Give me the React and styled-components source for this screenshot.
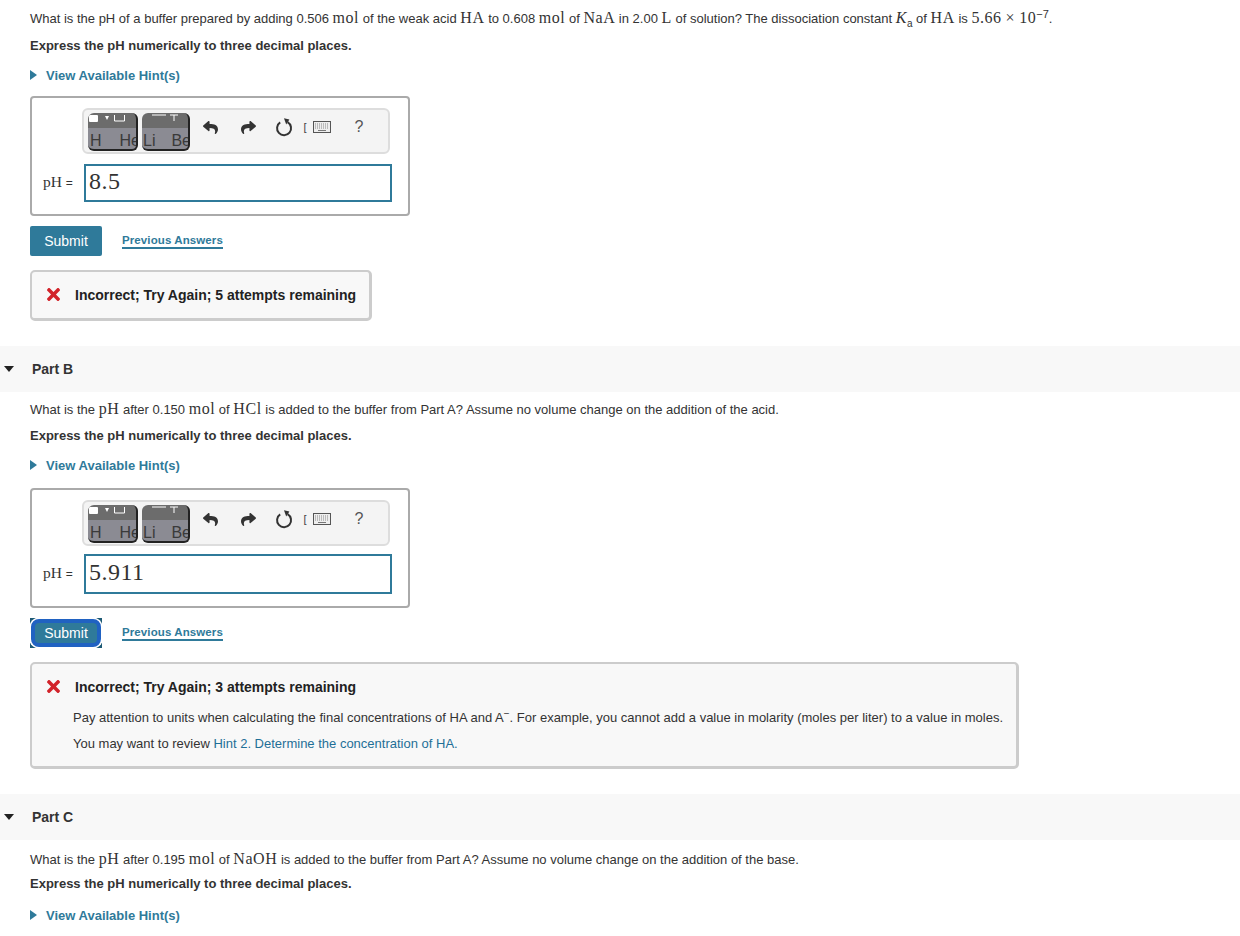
import React from "react";
import styled, { createGlobalStyle } from "styled-components";
import { FaReply, FaShare, FaTimes } from "react-icons/fa";

const TEAL = "#2f7a9a";

const GlobalStyle = createGlobalStyle`
  html, body {
    margin: 0;
    padding: 0;
    background: #fff;
    overflow: hidden;
  }
  body {
    font-family: "Liberation Sans", Arial, sans-serif;
    font-size: 13px;
    color: #333;
  }
`;

const Page = styled.div`
  width: 1240px;
  height: 936px;
  overflow: hidden;
`;

const PartBody = styled.section`
  padding-left: 30px;
  padding-top: ${props => props.$top}px;
`;

const Question = styled.div`
  line-height: 18px;
  height: 18px;
  white-space: nowrap;
`;

const Instruction = styled.div`
  line-height: 18px;
  height: 18px;
  font-weight: 700;
  margin-top: ${props => props.$top}px;
`;

const HintRow = styled.div`
  display: flex;
  align-items: center;
  gap: 9px;
  height: 18px;
  margin-top: ${props => props.$top}px;
  color: ${TEAL};
  font-weight: 700;
`;

const HintArrow = styled.span`
  width: 0;
  height: 0;
  border-left: 7px solid ${TEAL};
  border-top: 5px solid transparent;
  border-bottom: 5px solid transparent;
`;

const MathText = styled.span`
  font-family: "Liberation Serif", "Times New Roman", serif;
  font-size: 16px;
  letter-spacing: 0.55px;
  font-style: ${props => (props.$italic ? "italic" : "normal")};
`;

const TimesSign = styled.span`
  margin: 0 4px;
`;

const Sub = styled.sub`
  font-size: 10px;
  line-height: 0;
`;

const Sup = styled.sup`
  font-size: ${props => props.$size || 10}px;
  line-height: 0;
`;

const AnswerBox = styled.div`
  box-sizing: border-box;
  width: 380px;
  height: 120px;
  margin-top: ${props => props.$top}px;
  padding: 10px;
  border: 2px solid #aaa;
  border-radius: 4px;
  display: grid;
  grid-template-columns: 40px 308px;
  grid-template-rows: 46px ${props => props.$inputHeight}px;
  row-gap: ${props => 48 - props.$inputHeight}px;
`;

const Toolbar = styled.div`
  grid-column: 2;
  box-sizing: border-box;
  width: 308px;
  height: 46px;
  display: flex;
  align-items: flex-start;
  padding: 3px 0 0 4px;
  background: #f4f4f4;
  border: 2px solid #ddd;
  border-radius: 6px;
`;

const TemplateButton = styled.div`
  box-sizing: border-box;
  position: relative;
  flex: none;
  width: ${props => props.$w}px;
  height: 38px;
  margin-right: ${props => props.$gap}px;
  overflow: hidden;
  border-radius: 6px;
  border-right: 2px solid #222;
  border-bottom: 2px solid #222;
  background: linear-gradient(#6c6c6c 0 15px, #8b8b93 15px 100%);
`;

const TemplateGlyphs = styled.svg`
  display: block;
  width: 48px;
  height: 14px;
`;

const ElementRow = styled.div`
  display: flex;
  justify-content: space-between;
  width: ${props => props.$w}px;
  padding-left: ${props => props.$left}px;
  margin-top: 4px;
  font-size: 16px;
  line-height: 20px;
  color: #3a3a3a;
`;

const IconSlot = styled.div`
  flex: none;
  width: ${props => props.$w}px;
  height: 28px;
  display: flex;
  align-items: center;
  justify-content: center;
  gap: ${props => props.$gap || 0}px;
  color: #333;
  font-size: 15px;
`;

const Bracket = styled.span`
  font-size: 11px;
  color: #444;
`;

const HelpMark = styled.span`
  font-size: 16px;
  color: #555;
`;

const PhLabel = styled.div`
  grid-column: 1;
  align-self: center;
  white-space: nowrap;
  margin: 0 0 3px 1px;
  font-family: "Liberation Serif", "Times New Roman", serif;
  font-size: 15.5px;
`;

const Equal = styled.span`
  font-family: "Liberation Sans", Arial, sans-serif;
  font-size: 12px;
`;

const AnswerInput = styled.div`
  box-sizing: border-box;
  width: 308px;
  height: ${props => props.$h}px;
  margin-left: 2px;
  padding-left: 3px;
  border: 2px solid ${TEAL};
  font-family: "Liberation Serif", "Times New Roman", serif;
  font-size: 24px;
  line-height: ${props => props.$h - 7}px;
  color: #333;
  letter-spacing: 0.5px;
`;

const SubmitRow = styled.div`
  display: flex;
  align-items: center;
  gap: 20px;
  margin-top: 10px;
`;

const SubmitButton = styled.button`
  position: relative;
  width: 72px;
  height: 30px;
  padding: 0;
  border: 0;
  overflow: hidden;
  border-radius: ${props => (props.$focused ? "0" : "2px")};
  background: ${props => (props.$focused ? "#1d5a75" : TEAL)};
  color: #fff;
  font-family: "Liberation Sans", Arial, sans-serif;
  font-size: 14px;
  &::before {
    content: "";
    display: ${props => (props.$focused ? "block" : "none")};
    position: absolute;
    inset: 1px;
    border: 4px solid #2062c2;
    border-radius: 8px;
    background: ${TEAL};
    box-shadow: 0 0 0 1.5px #fff;
  }
`;

const SubmitLabel = styled.span`
  position: relative;
`;

const PreviousLink = styled.a`
  color: ${TEAL};
  font-size: 11.5px;
  font-weight: 700;
  line-height: 13px;
  letter-spacing: 0.1px;
  border-bottom: 2px solid ${TEAL};
`;

const Feedback = styled.div`
  box-sizing: border-box;
  width: ${props => props.$w}px;
  height: ${props => props.$h}px;
  margin-top: 14px;
  padding: 13px 0 0 15px;
  background: #f8f8f8;
  border: 2px solid #ccc;
  border-bottom-width: 3px;
  border-right-width: 3px;
  border-radius: 5px;
`;

const FeedbackHead = styled.div`
  display: flex;
  align-items: center;
  gap: 15px;
  height: 20px;
  font-size: 14px;
  font-weight: 700;
  color: #222;
  white-space: nowrap;
`;

const CrossIcon = styled(FaTimes)`
  flex: none;
  width: 13px;
  height: 19px;
  margin-bottom: 2px;
  color: #d2232a;
`;

const FeedbackText = styled.div`
  margin: ${props => props.$top}px 0 0 26px;
  line-height: 18px;
  white-space: nowrap;
`;

const HintLink = styled.a`
  color: #1f6f97;
`;

const PartHeader = styled.div`
  display: flex;
  align-items: center;
  height: 46px;
  margin-top: 25px;
  background: #f8f8f8;
`;

const PartCaret = styled.span`
  width: 0;
  height: 0;
  margin: 0 18px 0 4px;
  border-top: 6px solid #222;
  border-left: 5.5px solid transparent;
  border-right: 5.5px solid transparent;
`;

const PartTitle = styled.span`
  font-size: 14px;
  font-weight: 700;
  color: #333;
`;

const RefreshIcon = () => (
  <svg width="18" height="20" viewBox="0 0 18 20">
    <path d="M5.2 5.4 A7 7 0 1 0 12.6 5.2" fill="none" stroke="#333" strokeWidth="2" />
    <path d="M9 1.2 L14.4 2.4 L11.2 7.6 Z" fill="#333" />
  </svg>
);

const KeyboardIcon = () => (
  <svg width="18" height="12" viewBox="0 0 18 12">
    <rect x="0.5" y="0.5" width="17" height="11" fill="#eee" stroke="#555" />
    <path d="M2 3h14M2 5h14M2 7h14" stroke="#888" strokeDasharray="1 1" />
    <path d="M5 9.5h8" stroke="#777" />
  </svg>
);

const Answer = ({ top, value, inputHeight }) => (
  <AnswerBox $top={top} $inputHeight={inputHeight}>
    <Toolbar>
      <TemplateButton $w={50} $gap={4}>
        <TemplateGlyphs viewBox="0 0 48 14">
          <rect x="1" y="2" width="9" height="7" rx="1" fill="#fff" />
          <path d="M17 3h4l-2 4z" fill="#fff" />
          <path d="M26.5 2v6h10v-6" fill="none" stroke="#fff" />
        </TemplateGlyphs>
        <ElementRow $w={50} $left={2}>
          <span>H</span>
          <span>He</span>
        </ElementRow>
      </TemplateButton>
      <TemplateButton $w={48} $gap={1}>
        <TemplateGlyphs viewBox="0 0 48 14">
          <path d="M10 2h14" stroke="#fff" />
          <path d="M28 2h8M32 2v6" stroke="#fff" fill="none" />
        </TemplateGlyphs>
        <ElementRow $w={48} $left={1}>
          <span>Li</span>
          <span>Be</span>
        </ElementRow>
      </TemplateButton>
      <IconSlot $w={38}>
        <FaReply />
      </IconSlot>
      <IconSlot $w={38}>
        <FaShare />
      </IconSlot>
      <IconSlot $w={34}>
        <RefreshIcon />
      </IconSlot>
      <IconSlot $w={32} $gap={6}>
        <Bracket>[</Bracket>
        <KeyboardIcon />
      </IconSlot>
      <IconSlot $w={52}>
        <HelpMark>?</HelpMark>
      </IconSlot>
    </Toolbar>
    <PhLabel>
      pH <Equal>=</Equal>
    </PhLabel>
    <AnswerInput $h={inputHeight}>{value}</AnswerInput>
  </AnswerBox>
);

const Hint = ({ top = 11 }) => (
  <HintRow $top={top}>
    <HintArrow />
    View Available Hint(s)
  </HintRow>
);

const SubmitLine = ({ focused }) => (
  <SubmitRow>
    <SubmitButton $focused={focused}>
      <SubmitLabel>Submit</SubmitLabel>
    </SubmitButton>
    <PreviousLink>Previous Answers</PreviousLink>
  </SubmitRow>
);

export default function App() {
  return (
    <Page>
      <GlobalStyle />
      <PartBody $top={9}>
        <Question>
          What is the pH of a buffer prepared by adding 0.506 <MathText>mol</MathText> of the weak acid{" "}
          <MathText>HA</MathText> to 0.608 <MathText>mol</MathText> of <MathText>NaA</MathText> in 2.00{" "}
          <MathText>L</MathText> of solution? The dissociation constant{" "}
          <MathText $italic>K</MathText>
          <Sub>a</Sub> of <MathText>HA</MathText> is{" "}
          <MathText>
            5.66<TimesSign>×</TimesSign>10
          </MathText>
          <Sup $size={11}>−7</Sup>.
        </Question>
        <Instruction $top={10}>Express the pH numerically to three decimal places.</Instruction>
        <Hint />
        <Answer top={12} value="8.5" inputHeight={38} />
        <SubmitLine />
        <Feedback $w={342} $h={51}>
          <FeedbackHead>
            <CrossIcon />
            Incorrect; Try Again; 5 attempts remaining
          </FeedbackHead>
        </Feedback>
      </PartBody>

      <PartHeader>
        <PartCaret />
        <PartTitle>Part B</PartTitle>
      </PartHeader>
      <PartBody $top={8}>
        <Question>
          What is the <MathText>pH</MathText> after 0.150 <MathText>mol</MathText> of <MathText>HCl</MathText> is
          added to the buffer from Part A? Assume no volume change on the addition of the acid.
        </Question>
        <Instruction $top={9}>Express the pH numerically to three decimal places.</Instruction>
        <Hint />
        <Answer top={14} value="5.911" inputHeight={40} />
        <SubmitLine focused />
        <Feedback $w={989} $h={107}>
          <FeedbackHead>
            <CrossIcon />
            Incorrect; Try Again; 3 attempts remaining
          </FeedbackHead>
          <FeedbackText $top={12}>
            Pay attention to units when calculating the final concentrations of HA and A<Sup>−</Sup>. For example,
            you cannot add a value in molarity (moles per liter) to a value in moles.
          </FeedbackText>
          <FeedbackText $top={8}>
            You may want to review <HintLink>Hint 2. Determine the concentration of HA.</HintLink>
          </FeedbackText>
        </Feedback>
      </PartBody>

      <PartHeader>
        <PartCaret />
        <PartTitle>Part C</PartTitle>
      </PartHeader>
      <PartBody $top={10}>
        <Question>
          What is the <MathText>pH</MathText> after 0.195 <MathText>mol</MathText> of <MathText>NaOH</MathText> is
          added to the buffer from Part A? Assume no volume change on the addition of the base.
        </Question>
        <Instruction $top={7}>Express the pH numerically to three decimal places.</Instruction>
        <Hint top={13} />
      </PartBody>
    </Page>
  );
}
